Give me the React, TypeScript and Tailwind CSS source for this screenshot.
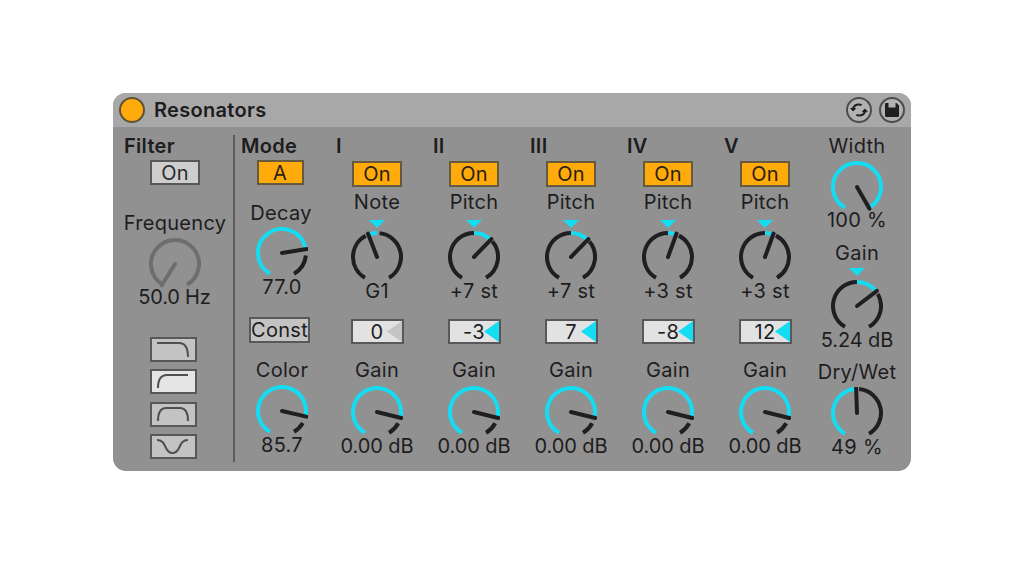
const CYAN = '#14dcf2';
const DARK = '#1f1f22';

// angle in degrees from 12 o'clock, clockwise
function point(a: number, r: number) {
  const rad = (a * Math.PI) / 180;
  return [26 + r * Math.sin(rad), 26 - r * Math.cos(rad)];
}

function arc(from: number, to: number, r = 24) {
  const [x1, y1] = point(from, r);
  const [x2, y2] = point(to, r);
  return `M${x1} ${y1}A${r} ${r} 0 ${to - from > 180 ? 1 : 0} 1 ${x2} ${y2}`;
}

type KnobProps = {
  needle: number;
  cyan?: [number, number];
  dark: [number, number][];
  color?: string;
};

function Knob({ needle, cyan, dark, color = DARK }: KnobProps) {
  const [nx, ny] = point(needle, 25);
  return (
    <svg width="52" height="52" viewBox="0 0 52 52" className="block shrink-0">
      {dark.map(([a, b], i) => (
        <path key={i} d={arc(a, b)} fill="none" stroke={color} strokeWidth="4" />
      ))}
      {cyan && <path d={arc(cyan[0], cyan[1])} fill="none" stroke={CYAN} strokeWidth="4" />}
      <path d={`M26 26L${nx} ${ny}`} stroke={color} strokeWidth="4" strokeLinecap="round" />
    </svg>
  );
}

function Line({ children, className = '' }: { children: React.ReactNode; className?: string }) {
  return <div className={`h-[20px] leading-[20px] whitespace-nowrap text-center ${className}`}>{children}</div>;
}

function Marker({ className = '' }: { className?: string }) {
  return (
    <svg width="16" height="8" viewBox="0 0 16 8" className={`block shrink-0 ${className}`}>
      <path d="M0 0H16L8 8Z" fill={CYAN} />
    </svg>
  );
}

const channels = [
  { label: 'I', title: 'Note', value: 'G1', box: '0', idle: true, needle: -21, cyan: [-21, 0], dark: [[-150, -28], [6, 150]] },
  { label: 'II', title: 'Pitch', value: '+7 st', box: '-3', idle: false, needle: 44, cyan: [0, 40], dark: [[-150, 0], [50, 150]] },
  { label: 'III', title: 'Pitch', value: '+7 st', box: '7', idle: false, needle: 44, cyan: [0, 40], dark: [[-150, 0], [50, 150]] },
  { label: 'IV', title: 'Pitch', value: '+3 st', box: '-8', idle: false, needle: 20, cyan: [0, 15], dark: [[-150, 0], [27, 150]] },
  { label: 'V', title: 'Pitch', value: '+3 st', box: '12', idle: false, needle: 20, cyan: [0, 15], dark: [[-150, 0], [27, 150]] },
] as { label: string; title: string; value: string; box: string; idle: boolean; needle: number; cyan: [number, number]; dark: [number, number][] }[];

const filterShapes = [
  { d: 'M5 4H27C33 4 36 8 36 18', active: false },
  { d: 'M6 17C6 8 9 4 15 4H36', active: true },
  { d: 'M6 17C6 8 9 4 14 4H28C33 4 36 8 36 17', active: false },
  { d: 'M5 4C11 4 12 8 14 12C16 16 18 17 20.5 17C23 17 25 16 27 12C29 8 30 4 36 4', active: false },
];

function GainKnob() {
  return <Knob needle={104} cyan={[-150, 104]} dark={[[118, 150]]} />;
}

function OnButton({ label = 'On' }: { label?: string }) {
  return (
    <div className="w-[50px] h-[26px] mt-[5px] shrink-0 bg-[#ffab0c] border-2 border-[#665a3e] flex items-center justify-center leading-none text-[#2a2112]">
      {label}
    </div>
  );
}

export default function App() {
  return (
    <div className="w-[1024px] h-[565px] bg-white flex justify-center pt-[93px] overflow-hidden font-['Inter',sans-serif] text-[20px] tracking-[0.3px] text-[#1d1d20]">
      <div className="w-[798px] h-[378px] bg-[#929192] rounded-[13px] overflow-hidden flex flex-col">
        {/* title bar */}
        <div className="h-[34px] shrink-0 bg-[#a9a8a9] flex items-center pl-[6px] pr-[6px]">
          <div className="w-[26px] h-[26px] rounded-full bg-[#ffab0c] border-2 border-[#5f5236]" />
          <div className="ml-[9px] text-[20px] font-semibold tracking-[0.3px]">Resonators</div>
          <div className="ml-auto flex gap-[7px]">
            <div className="w-[26px] h-[26px] rounded-full border-2 border-[#4c4c4e] bg-[#b2b1b2] flex items-center justify-center">
              <svg width="18" height="18" viewBox="0 0 18 18" fill="none" stroke={DARK} strokeWidth="2">
                <path d="M3 8C3.6 5 6 3.5 9 3.5C10 3.5 11 3.7 11.6 4.2" />
                <path d="M15 10C14.4 13 12 14.5 9 14.5C8 14.5 7 14.3 6.4 13.8" />
                <path d="M0.8 7.2L3 10L5.6 7.6Z" fill={DARK} strokeWidth="1" />
                <path d="M17.2 10.8L15 8L12.4 10.4Z" fill={DARK} strokeWidth="1" />
              </svg>
            </div>
            <div className="w-[26px] h-[26px] rounded-full border-2 border-[#4c4c4e] bg-[#b2b1b2] flex items-center justify-center">
              <svg width="16" height="16" viewBox="0 0 16 16">
                <path d="M2 1H12.5L15 3.5V13.5A1.5 1.5 0 0 1 13.5 15H2.5A1.5 1.5 0 0 1 1 13.5V2A1 1 0 0 1 2 1Z" fill={DARK} />
                <rect x="4.5" y="1" width="7" height="4.5" fill="#b2b1b2" />
              </svg>
            </div>
          </div>
        </div>

        {/* device body */}
        <div className="flex flex-1 pt-[9px] min-h-0">
          {/* filter */}
          <div className="ml-[9px] w-[106px] shrink-0 flex flex-col items-center">
            <Line className="self-start ml-[2px] font-semibold">Filter</Line>
            <div className="w-[50px] h-[25px] mt-[4px] shrink-0 bg-[#cfcecf] border-2 border-[#58585a] flex items-center justify-center leading-none text-[#2b2b2e]">
              On
            </div>
            <Line className="mt-[28px]">Frequency</Line>
            <div className="mt-[5px]">
              <Knob needle={-148} dark={[[-150, 150]]} color="#6e6d6f" />
            </div>
            <Line className="mt-[-3px] tracking-[-0.2px] mr-[1px]">50.0 Hz</Line>
            <div className="mt-[30px] mr-[4px] flex flex-col gap-[7.3px]">
              {filterShapes.map((shape, i) => (
                <div
                  key={i}
                  className={`w-[47px] h-[25px] border-2 border-[#58585a] ${shape.active ? 'bg-[#e6e5e6]' : 'bg-[#c4c3c4]'}`}
                >
                  <svg width="43" height="21" viewBox="0 0 43 21" fill="none">
                    <path d={shape.d} stroke="#4f4f52" strokeWidth="2" />
                  </svg>
                </div>
              ))}
            </div>
          </div>

          <div className="ml-[5px] w-[2px] h-[327px] mt-[-1px] shrink-0 bg-[#5d5c5e]" />

          {/* mode */}
          <div className="ml-[6px] w-[82px] shrink-0 flex flex-col items-center">
            <Line className="self-start font-semibold">Mode</Line>
            <div className="w-[47px] h-[25px] mt-[4px] mr-[4px] shrink-0 bg-[#ffab0c] border-2 border-[#665a3e] flex items-center justify-center leading-none text-[#2a2112]">
              A
            </div>
            <Line className="mt-[18px] mr-[2px]">Decay</Line>
            <div className="mt-[4px]">
              <Knob needle={81} cyan={[-150, 78]} dark={[[96, 150]]} />
            </div>
            <Line className="mt-[-2px]">77.0</Line>
            <div className="w-[61px] h-[26px] mt-[20px] mr-[5px] shrink-0 bg-[#c4c3c4] border-2 border-[#58585a] flex items-center justify-center leading-none">
              Const
            </div>
            <Line className="mt-[17px]">Color</Line>
            <div className="mt-[5px]">
              <Knob needle={103} cyan={[-150, 103]} dark={[[120, 150]]} />
            </div>
            <Line className="mt-[-2px]">85.7</Line>
          </div>

          {/* resonator channels */}
          <div className="ml-[5.5px] flex shrink-0">
            {channels.map((ch) => (
              <div key={ch.label} className="w-[97px] shrink-0 flex flex-col items-center">
                <Line className="self-start ml-[7.5px] font-semibold">{ch.label}</Line>
                <OnButton />
                <Line className="mt-[5px]">{ch.title}</Line>
                <Marker className="mt-[8px]" />
                <div className="mt-[3px]">
                  <Knob needle={ch.needle} cyan={ch.cyan} dark={ch.dark} />
                </div>
                <Line className="mt-[-2px]">{ch.value}</Line>
                <div className="relative w-[53px] h-[25px] mt-[18px] shrink-0 bg-[#e3e2e3] border-2 border-[#58585a] flex items-center justify-center leading-none">
                  {ch.box}
                  <svg width="15" height="21" viewBox="0 0 15 21" className="absolute right-0 top-0">
                    <path d="M15 0V21L0 10.5Z" fill={ch.idle ? '#c5c4c5' : CYAN} />
                  </svg>
                </div>
                <Line className="mt-[16px]">Gain</Line>
                <div className="mt-[6px]">
                  <GainKnob />
                </div>
                <Line className="mt-[-2px] tracking-[-0.1px]">0.00 dB</Line>
              </div>
            ))}
          </div>

          {/* output */}
          <div className="w-[86px] ml-[0.5px] shrink-0 flex flex-col items-center">
            <Line>Width</Line>
            <div className="mt-[5px]">
              <Knob needle={150} cyan={[-150, 150]} dark={[]} />
            </div>
            <Line className="mt-[-3px]">100 %</Line>
            <Line className="mt-[13px]">Gain</Line>
            <Marker className="mt-[5px]" />
            <div className="mt-[4px]">
              <Knob needle={53} cyan={[0, 48]} dark={[[-150, 0], [60, 150]]} />
            </div>
            <Line className="mt-[-2px] tracking-[-0.1px]">5.24 dB</Line>
            <Line className="mt-[12px]">Dry/Wet</Line>
            <div className="mt-[5px]">
              <Knob needle={-2} cyan={[-150, -4]} dark={[[5, 150]]} />
            </div>
            <Line className="mt-[-2px]">49 %</Line>
          </div>
        </div>
      </div>
    </div>
  );
}
